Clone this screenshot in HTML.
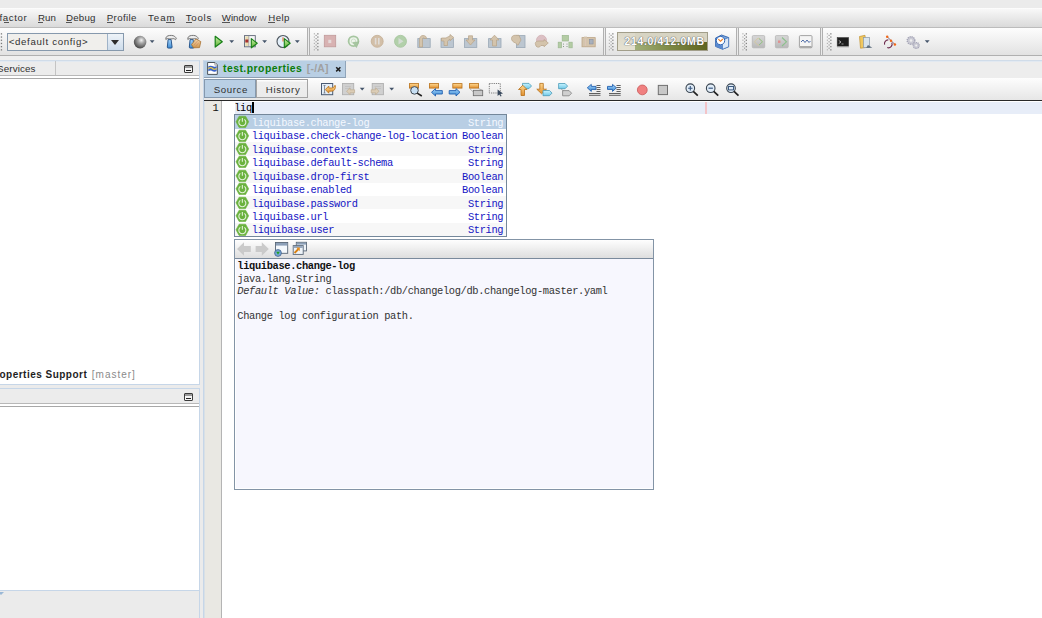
<!DOCTYPE html>
<html><head><meta charset="utf-8">
<style>
*{margin:0;padding:0;box-sizing:border-box}
html,body{width:1042px;height:618px;overflow:hidden;background:#ebebeb;font-family:"Liberation Sans",sans-serif;position:relative}
.a{position:absolute}
.t{position:absolute;white-space:pre;line-height:20px}
.tg{position:absolute;top:27px;height:29px;border:1px solid #b0b0b0;border-top-color:#bcbcbc;background:linear-gradient(#fdfdfd,#e2e2e2)}
.grip{position:absolute;width:5px;background-image:radial-gradient(circle at 1px 1px,#8c8c8c 0.7px,rgba(140,140,140,0) 1.1px);background-size:3px 3px}
.dd{position:absolute;width:0;height:0;border-left:2.5px solid transparent;border-right:2.5px solid transparent;border-top:3px solid #4a5868}
svg.a{overflow:visible}
</style></head><body>
<!-- menubar -->
<div class="a" style="left:0;top:8px;width:1042px;height:19px;background:linear-gradient(#fefefe 0,#f7f7f7 1.5px,#dadada 100%)"></div>
<div class="a" style="left:0;top:56px;width:1042px;height:4px;background:#efefef"></div>

<!-- toolbar groups -->
<div class="tg" style="left:-3px;width:311px"></div>
<div class="tg" style="left:309px;width:295px"></div>
<div class="tg" style="left:605px;width:132px"></div>
<div class="tg" style="left:738px;width:83px"></div>
<div class="tg" style="left:822px;width:240px"></div>
<div class="a" style="left:0;top:27px;width:1042px;height:1px;background:#bcbcbc"></div>
<div class="a" style="left:0;top:55px;width:1042px;height:1px;background:#b0b0b0"></div>

<!-- combo -->
<div class="a" style="left:7px;top:33px;width:117px;height:18px;border:1px solid #8699ad;background:#f0efec"></div>
<div class="a" style="left:107px;top:34px;width:16px;height:16px;border-left:1px solid #9fb3c8;background:linear-gradient(#eef3f8,#cddceb)"></div>
<div class="a" style="left:111px;top:40px;width:0;height:0;border-left:4.5px solid transparent;border-right:4.5px solid transparent;border-top:5px solid #2c2c2c"></div>

<!-- memory bar -->
<div class="a" style="left:617px;top:32px;width:91px;height:19px;border:1px solid #a29e8a;background:#d7d4c3"></div>
<div class="a" style="left:618px;top:33px;width:17px;height:17px;background:linear-gradient(#dcd9ca,#e6e2d2)"></div>
<div class="a" style="left:635px;top:41.7px;width:72px;height:8.3px;background:linear-gradient(90deg,#a2b07a,#808c48 45%,#5e6420)"></div>
<!-- left panel 1 -->
<div class="a" style="left:0;top:60px;width:200px;height:325px;border-top:1px solid #d0dce9;border-right:1px solid #c6d6e8;border-bottom:1px solid #c6d6e8;background:#fff"></div>
<div class="a" style="left:0;top:61px;width:199px;height:14px;background:linear-gradient(#e2e9f1 0,#e2e9f1 1px,#ececec 1px)"></div>
<div class="a" style="left:0;top:75px;width:199px;height:1px;background:#b8b8b8"></div>
<div class="a" style="left:0;top:78px;width:199px;height:1px;background:#a8a8a8"></div>
<div class="a" style="left:55px;top:61px;width:1px;height:14px;background:#c4c4c4"></div>
<!-- left panel 2 -->
<div class="a" style="left:0;top:388px;width:200px;height:203px;border-top:1px solid #c6d6e8;border-right:1px solid #c6d6e8;border-bottom:1px solid #c6d6e8;background:#fff"></div>
<div class="a" style="left:0;top:389px;width:199px;height:14px;background:#ececec"></div>
<div class="a" style="left:0;top:403px;width:199px;height:1px;background:#b8b8b8"></div>
<div class="a" style="left:0;top:406px;width:199px;height:1px;background:#a8a8a8"></div>
<!-- minimize buttons -->
<div class="a" style="left:184px;top:65px;width:9px;height:8px;border:1px solid #3c3c3c;border-radius:1px;background:linear-gradient(#9a9a9a 0,#9a9a9a 2px,#f4f4f4 2px)"></div>
<div class="a" style="left:186px;top:70px;width:5px;height:1px;background:#222"></div>
<div class="a" style="left:184px;top:393px;width:9px;height:8px;border:1px solid #3c3c3c;border-radius:1px;background:linear-gradient(#9a9a9a 0,#9a9a9a 2px,#f4f4f4 2px)"></div>
<div class="a" style="left:186px;top:398px;width:5px;height:1px;background:#222"></div>
<div class="a" style="left:-2px;top:592px;width:0;height:0;border-left:3.5px solid transparent;border-right:3.5px solid transparent;border-top:3.5px solid #9ab8d6"></div>
<div class="a" style="left:199px;top:591px;width:1px;height:27px;background:#c6d6e8"></div>

<!-- editor area -->
<div class="a" style="left:203px;top:60px;width:839px;height:1px;background:#d0dce9"></div>
<div class="a" style="left:203px;top:61px;width:839px;height:17px;background:linear-gradient(#e2e9f1 0,#e2e9f1 1px,#ededed 1px)"></div>
<div class="a" style="left:204px;top:61px;width:142px;height:17px;background:#b9cfe4;border-right:1px solid #90a5ba;border-bottom:1px solid #8d9fb2"></div>
<div class="a" style="left:203px;top:60px;width:1px;height:558px;background:#c6d6e8"></div>
<div class="a" style="left:204px;top:101px;width:1px;height:517px;background:#d8e0e6"></div>
<div class="a" style="left:204px;top:78px;width:838px;height:22px;background:linear-gradient(#fdfdfd,#e6e6e6)"></div>
<!-- Source / History buttons -->
<div class="a" style="left:204px;top:79px;width:52px;height:19px;border:1px solid #8599ae;background:#b9cfe4"></div>
<div class="a" style="left:256px;top:79px;width:52px;height:19px;border:1px solid #a4a4a4;border-top-color:#9c9c9c;background:linear-gradient(#fdfdfd 0,#fdfdfd 1px,#eeeeee 2px,#ebebeb)"></div>
<div class="a" style="left:204px;top:100px;width:838px;height:1px;background:#282828"></div>
<!-- editor body -->
<div class="a" style="left:205px;top:101px;width:16px;height:517px;background:#e9e8e3"></div>
<div class="a" style="left:221px;top:101px;width:1px;height:517px;background:#b4b4b4"></div>
<div class="a" style="left:222px;top:101px;width:820px;height:517px;background:#fff"></div>
<div class="a" style="left:235px;top:101.5px;width:807px;height:12px;background:#e7edf8"></div>
<div class="a" style="left:705px;top:101.5px;width:1.5px;height:12px;background:#f3c4c8"></div>
<div class="a" style="left:252.3px;top:102px;width:1.5px;height:11px;background:#000"></div>

<div class="t" style="left:234.20px;top:98.00px;font:10.4px 'Liberation Mono';line-height:20px;letter-spacing:-0.361px;color:#000">liq</div><div class="t" style="left:212.60px;top:98.10px;font:10.4px 'Liberation Mono';line-height:20px;letter-spacing:-0.361px;color:#111">1</div>

<!-- completion popup -->
<div class="a" style="left:234px;top:114px;width:273px;height:123px;border:1px solid #74879a;background:#fff"></div>
<div class="a" style="left:235px;top:115.30px;width:271px;height:13.46px;background:#b8cee4"></div>
<svg class="a" style="left:235.8px;top:116.10px" width="13" height="12" viewBox="0 0 13 12"><polygon points="3.1,0.2 9.6,0.2 12.7,5.8 9.6,11.5 3.1,11.5 0,5.8" fill="#6ab23e" stroke="#6ab23e" stroke-width="0.6" stroke-linejoin="round"/><path d="M4.3,3.4 A3.5,3.5 0 1,0 8.4,3.4" fill="none" stroke="#e4f2dc" stroke-width="1.1"/><line x1="6.35" y1="2" x2="6.35" y2="5.8" stroke="#e4f2dc" stroke-width="1.1"/></svg>
<div class="t" style="left:251.80px;top:112.80px;font:10.4px 'Liberation Mono';line-height:20px;letter-spacing:-0.361px;color:#f4f8ff">liquibase.change-log</div>
<div class="t" style="left:467.93px;top:112.80px;font:10.4px 'Liberation Mono';line-height:20px;letter-spacing:-0.361px;color:#f4f8ff">String</div>
<div class="a" style="left:235px;top:128.75px;width:271px;height:13.46px;background:#ffffff"></div>
<svg class="a" style="left:235.8px;top:129.55px" width="13" height="12" viewBox="0 0 13 12"><polygon points="3.1,0.2 9.6,0.2 12.7,5.8 9.6,11.5 3.1,11.5 0,5.8" fill="#6ab23e" stroke="#6ab23e" stroke-width="0.6" stroke-linejoin="round"/><path d="M4.3,3.4 A3.5,3.5 0 1,0 8.4,3.4" fill="none" stroke="#e4f2dc" stroke-width="1.1"/><line x1="6.35" y1="2" x2="6.35" y2="5.8" stroke="#e4f2dc" stroke-width="1.1"/></svg>
<div class="t" style="left:251.80px;top:126.25px;font:10.4px 'Liberation Mono';line-height:20px;letter-spacing:-0.361px;color:#1414c4">liquibase.check-change-log-location</div>
<div class="t" style="left:462.05px;top:126.25px;font:10.4px 'Liberation Mono';line-height:20px;letter-spacing:-0.361px;color:#1414c4">Boolean</div>
<div class="a" style="left:235px;top:142.20px;width:271px;height:13.46px;background:#f7f7f7"></div>
<svg class="a" style="left:235.8px;top:143.00px" width="13" height="12" viewBox="0 0 13 12"><polygon points="3.1,0.2 9.6,0.2 12.7,5.8 9.6,11.5 3.1,11.5 0,5.8" fill="#6ab23e" stroke="#6ab23e" stroke-width="0.6" stroke-linejoin="round"/><path d="M4.3,3.4 A3.5,3.5 0 1,0 8.4,3.4" fill="none" stroke="#e4f2dc" stroke-width="1.1"/><line x1="6.35" y1="2" x2="6.35" y2="5.8" stroke="#e4f2dc" stroke-width="1.1"/></svg>
<div class="t" style="left:251.80px;top:139.70px;font:10.4px 'Liberation Mono';line-height:20px;letter-spacing:-0.361px;color:#1414c4">liquibase.contexts</div>
<div class="t" style="left:467.93px;top:139.70px;font:10.4px 'Liberation Mono';line-height:20px;letter-spacing:-0.361px;color:#1414c4">String</div>
<div class="a" style="left:235px;top:155.65px;width:271px;height:13.46px;background:#ffffff"></div>
<svg class="a" style="left:235.8px;top:156.45px" width="13" height="12" viewBox="0 0 13 12"><polygon points="3.1,0.2 9.6,0.2 12.7,5.8 9.6,11.5 3.1,11.5 0,5.8" fill="#6ab23e" stroke="#6ab23e" stroke-width="0.6" stroke-linejoin="round"/><path d="M4.3,3.4 A3.5,3.5 0 1,0 8.4,3.4" fill="none" stroke="#e4f2dc" stroke-width="1.1"/><line x1="6.35" y1="2" x2="6.35" y2="5.8" stroke="#e4f2dc" stroke-width="1.1"/></svg>
<div class="t" style="left:251.80px;top:153.15px;font:10.4px 'Liberation Mono';line-height:20px;letter-spacing:-0.361px;color:#1414c4">liquibase.default-schema</div>
<div class="t" style="left:467.93px;top:153.15px;font:10.4px 'Liberation Mono';line-height:20px;letter-spacing:-0.361px;color:#1414c4">String</div>
<div class="a" style="left:235px;top:169.10px;width:271px;height:13.46px;background:#f7f7f7"></div>
<svg class="a" style="left:235.8px;top:169.90px" width="13" height="12" viewBox="0 0 13 12"><polygon points="3.1,0.2 9.6,0.2 12.7,5.8 9.6,11.5 3.1,11.5 0,5.8" fill="#6ab23e" stroke="#6ab23e" stroke-width="0.6" stroke-linejoin="round"/><path d="M4.3,3.4 A3.5,3.5 0 1,0 8.4,3.4" fill="none" stroke="#e4f2dc" stroke-width="1.1"/><line x1="6.35" y1="2" x2="6.35" y2="5.8" stroke="#e4f2dc" stroke-width="1.1"/></svg>
<div class="t" style="left:251.80px;top:166.60px;font:10.4px 'Liberation Mono';line-height:20px;letter-spacing:-0.361px;color:#1414c4">liquibase.drop-first</div>
<div class="t" style="left:462.05px;top:166.60px;font:10.4px 'Liberation Mono';line-height:20px;letter-spacing:-0.361px;color:#1414c4">Boolean</div>
<div class="a" style="left:235px;top:182.55px;width:271px;height:13.46px;background:#ffffff"></div>
<svg class="a" style="left:235.8px;top:183.35px" width="13" height="12" viewBox="0 0 13 12"><polygon points="3.1,0.2 9.6,0.2 12.7,5.8 9.6,11.5 3.1,11.5 0,5.8" fill="#6ab23e" stroke="#6ab23e" stroke-width="0.6" stroke-linejoin="round"/><path d="M4.3,3.4 A3.5,3.5 0 1,0 8.4,3.4" fill="none" stroke="#e4f2dc" stroke-width="1.1"/><line x1="6.35" y1="2" x2="6.35" y2="5.8" stroke="#e4f2dc" stroke-width="1.1"/></svg>
<div class="t" style="left:251.80px;top:180.05px;font:10.4px 'Liberation Mono';line-height:20px;letter-spacing:-0.361px;color:#1414c4">liquibase.enabled</div>
<div class="t" style="left:462.05px;top:180.05px;font:10.4px 'Liberation Mono';line-height:20px;letter-spacing:-0.361px;color:#1414c4">Boolean</div>
<div class="a" style="left:235px;top:196.00px;width:271px;height:13.46px;background:#f7f7f7"></div>
<svg class="a" style="left:235.8px;top:196.80px" width="13" height="12" viewBox="0 0 13 12"><polygon points="3.1,0.2 9.6,0.2 12.7,5.8 9.6,11.5 3.1,11.5 0,5.8" fill="#6ab23e" stroke="#6ab23e" stroke-width="0.6" stroke-linejoin="round"/><path d="M4.3,3.4 A3.5,3.5 0 1,0 8.4,3.4" fill="none" stroke="#e4f2dc" stroke-width="1.1"/><line x1="6.35" y1="2" x2="6.35" y2="5.8" stroke="#e4f2dc" stroke-width="1.1"/></svg>
<div class="t" style="left:251.80px;top:193.50px;font:10.4px 'Liberation Mono';line-height:20px;letter-spacing:-0.361px;color:#1414c4">liquibase.password</div>
<div class="t" style="left:467.93px;top:193.50px;font:10.4px 'Liberation Mono';line-height:20px;letter-spacing:-0.361px;color:#1414c4">String</div>
<div class="a" style="left:235px;top:209.45px;width:271px;height:13.46px;background:#ffffff"></div>
<svg class="a" style="left:235.8px;top:210.25px" width="13" height="12" viewBox="0 0 13 12"><polygon points="3.1,0.2 9.6,0.2 12.7,5.8 9.6,11.5 3.1,11.5 0,5.8" fill="#6ab23e" stroke="#6ab23e" stroke-width="0.6" stroke-linejoin="round"/><path d="M4.3,3.4 A3.5,3.5 0 1,0 8.4,3.4" fill="none" stroke="#e4f2dc" stroke-width="1.1"/><line x1="6.35" y1="2" x2="6.35" y2="5.8" stroke="#e4f2dc" stroke-width="1.1"/></svg>
<div class="t" style="left:251.80px;top:206.95px;font:10.4px 'Liberation Mono';line-height:20px;letter-spacing:-0.361px;color:#1414c4">liquibase.url</div>
<div class="t" style="left:467.93px;top:206.95px;font:10.4px 'Liberation Mono';line-height:20px;letter-spacing:-0.361px;color:#1414c4">String</div>
<div class="a" style="left:235px;top:222.90px;width:271px;height:13.46px;background:#f7f7f7"></div>
<svg class="a" style="left:235.8px;top:223.70px" width="13" height="12" viewBox="0 0 13 12"><polygon points="3.1,0.2 9.6,0.2 12.7,5.8 9.6,11.5 3.1,11.5 0,5.8" fill="#6ab23e" stroke="#6ab23e" stroke-width="0.6" stroke-linejoin="round"/><path d="M4.3,3.4 A3.5,3.5 0 1,0 8.4,3.4" fill="none" stroke="#e4f2dc" stroke-width="1.1"/><line x1="6.35" y1="2" x2="6.35" y2="5.8" stroke="#e4f2dc" stroke-width="1.1"/></svg>
<div class="t" style="left:251.80px;top:220.40px;font:10.4px 'Liberation Mono';line-height:20px;letter-spacing:-0.361px;color:#1414c4">liquibase.user</div>
<div class="t" style="left:467.93px;top:220.40px;font:10.4px 'Liberation Mono';line-height:20px;letter-spacing:-0.361px;color:#1414c4">String</div>

<!-- doc popup -->
<div class="a" style="left:234px;top:239px;width:420px;height:251px;border:1px solid #8394a6;border-right-width:1.5px;background:#fff"></div>
<div class="a" style="left:236px;top:259px;width:416.5px;height:229px;background:#f7f7fe"></div>
<div class="a" style="left:235px;top:240px;width:418px;height:18px;background:linear-gradient(#fefefe,#dedede)"></div>
<div class="a" style="left:235px;top:258px;width:418px;height:1px;background:#7a8a9c"></div>
<div class="t" style="left:237.30px;top:256.40px;font:bold 10.4px 'Liberation Mono';line-height:20px;letter-spacing:-0.361px;color:#111">liquibase.change-log</div>
<div class="t" style="left:237.30px;top:268.50px;font:10.4px 'Liberation Mono';line-height:20px;letter-spacing:-0.361px;color:#333">java.lang.String</div>
<div class="t" style="left:237.30px;top:280.90px;font:10.4px 'Liberation Mono';line-height:20px;letter-spacing:-0.361px;color:#333;white-space:pre"><i>Default Value:</i> classpath:/db/changelog/db.changelog-master.yaml</div>
<div class="t" style="left:237.30px;top:306.10px;font:10.4px 'Liberation Mono';line-height:20px;letter-spacing:-0.361px;color:#333">Change log configuration path.</div>

<svg class="a" style="left:0;top:0" width="1042" height="618" viewBox="0 0 1042 618"><defs>
<radialGradient id="globe" cx="0.6" cy="0.35" r="0.8"><stop offset="0" stop-color="#f4f4f4"/><stop offset="0.3" stop-color="#a8a8a8"/><stop offset="0.75" stop-color="#555"/><stop offset="1" stop-color="#2a2a2a"/></radialGradient>
<linearGradient id="broom" x1="0" y1="0" x2="0" y2="1"><stop offset="0" stop-color="#f6dcb2"/><stop offset="1" stop-color="#cc9448"/></linearGradient>
<linearGradient id="grn" x1="0" y1="0" x2="0" y2="1"><stop offset="0" stop-color="#c8f0a8"/><stop offset="1" stop-color="#5cb030"/></linearGradient>
<linearGradient id="blu" x1="0" y1="0" x2="0" y2="1"><stop offset="0" stop-color="#a8d8ff"/><stop offset="1" stop-color="#3a88d0"/></linearGradient>
<linearGradient id="org" x1="0" y1="0" x2="0" y2="1"><stop offset="0" stop-color="#ffd890"/><stop offset="1" stop-color="#e09030"/></linearGradient>
<linearGradient id="mem" x1="0" y1="0" x2="1" y2="0"><stop offset="0" stop-color="#b8c49c"/><stop offset="1" stop-color="#5a6018"/></linearGradient>
<linearGradient id="gbox" x1="0" y1="0" x2="0" y2="1"><stop offset="0" stop-color="#d8d8d8"/><stop offset="1" stop-color="#b8b8b8"/></linearGradient>
<linearGradient id="cyan" x1="0" y1="0" x2="0" y2="1"><stop offset="0" stop-color="#c8f4ff"/><stop offset="1" stop-color="#70c8e8"/></linearGradient>
</defs><rect x="0.8" y="33.2" width="1.3" height="1.3" fill="#7a7a7a"/><rect x="0.8" y="36.4" width="1.3" height="1.3" fill="#7a7a7a"/><rect x="0.8" y="39.6" width="1.3" height="1.3" fill="#7a7a7a"/><rect x="0.8" y="42.8" width="1.3" height="1.3" fill="#7a7a7a"/><rect x="0.8" y="46.0" width="1.3" height="1.3" fill="#7a7a7a"/><rect x="0.8" y="49.2" width="1.3" height="1.3" fill="#7a7a7a"/><circle cx="140.1" cy="42.1" r="6.3" fill="url(#globe)"/><polygon points="149.7,40.2 154.5,40.2 152.1,43.0" fill="#44546a"/><path d="M168.1,39.599999999999994 L171.1,39.599999999999994 L172.1,47.099999999999994 Q172.1,48.099999999999994 171.1,48.099999999999994 L168.3,48.099999999999994 Q167.3,48.099999999999994 167.3,47.099999999999994 Z" fill="url(#blu)" stroke="#1c4c84" stroke-width="0.9"/><path d="M165.9,37.9 C166.4,35.9 168.9,35.3 171.4,35.4 C173.9,35.5 175.9,36.699999999999996 176.3,38.9 L175.5,39.699999999999996 C174.5,38.699999999999996 173.1,38.3 172.1,38.9 L169.1,38.9 C168.1,38.3 166.9,38.4 165.9,39.599999999999994 Z" fill="#ececec" stroke="#686868" stroke-width="0.9"/><path d="M190.1,39.599999999999994 L193.1,39.599999999999994 L194.1,47.099999999999994 Q194.1,48.099999999999994 193.1,48.099999999999994 L190.3,48.099999999999994 Q189.3,48.099999999999994 189.3,47.099999999999994 Z" fill="url(#blu)" stroke="#1c4c84" stroke-width="0.9"/><path d="M187.9,37.9 C188.4,35.9 190.9,35.3 193.4,35.4 C195.9,35.5 197.9,36.699999999999996 198.3,38.9 L197.5,39.699999999999996 C196.5,38.699999999999996 195.1,38.3 194.1,38.9 L191.1,38.9 C190.1,38.3 188.9,38.4 187.9,39.599999999999994 Z" fill="#ececec" stroke="#686868" stroke-width="0.9"/><path d="M191.5,44.5 L196,39 L200.8,41.6 L199.5,47.6 L193.5,47.8 Z" fill="url(#broom)" stroke="#a87030" stroke-width="0.8"/><path d="M194,45 L197.5,41 M195.5,46.5 L199,42.5" stroke="#d08060" stroke-width="0.6"/><path d="M215.2,36.3 L222.3,41.7 L215.2,47.1 Z" fill="url(#grn)" stroke="#188018" stroke-width="1.2" stroke-linejoin="round"/><polygon points="229.3,40.2 234.10000000000002,40.2 231.70000000000002,43.0" fill="#44546a"/><rect x="244.5" y="35.6" width="10.8" height="11.2" fill="#f4f4f4" stroke="#606878" stroke-width="0.9"/><rect x="245.3" y="36.4" width="3.2" height="9.6" fill="#e8dcb0"/><rect x="245.3" y="39.5" width="3.2" height="3" fill="#a83030"/><line x1="248.8" y1="36" x2="248.8" y2="46.5" stroke="#808080" stroke-width="0.6"/><path d="M251.3,38.6 L257.2,43.3 L251.3,47.8 Z" fill="url(#grn)" stroke="#188018" stroke-width="1.1" stroke-linejoin="round"/><polygon points="262.2,40.2 267.0,40.2 264.59999999999997,43.0" fill="#44546a"/><circle cx="283" cy="41.5" r="6" fill="#e4f0fa" stroke="#505860" stroke-width="1.1"/><line x1="283" y1="37.2" x2="283" y2="41.5" stroke="#f07030" stroke-width="1.1"/><path d="M284.3,38.6 L290.2,43.2 L284.3,47.8 Z" fill="url(#grn)" stroke="#188018" stroke-width="1.1" stroke-linejoin="round"/><polygon points="294.9,40.2 299.7,40.2 297.29999999999995,43.0" fill="#44546a"/><rect x="313.8" y="33.2" width="1.2" height="1.2" fill="#b4b4b4"/><rect x="317.2" y="33.2" width="1.3" height="1.3" fill="#858585"/><rect x="315.5" y="34.8" width="1.2" height="1.2" fill="#9c9c9c"/><rect x="313.8" y="36.4" width="1.2" height="1.2" fill="#b4b4b4"/><rect x="317.2" y="36.4" width="1.3" height="1.3" fill="#858585"/><rect x="315.5" y="38.0" width="1.2" height="1.2" fill="#9c9c9c"/><rect x="313.8" y="39.6" width="1.2" height="1.2" fill="#b4b4b4"/><rect x="317.2" y="39.6" width="1.3" height="1.3" fill="#858585"/><rect x="315.5" y="41.2" width="1.2" height="1.2" fill="#9c9c9c"/><rect x="313.8" y="42.8" width="1.2" height="1.2" fill="#b4b4b4"/><rect x="317.2" y="42.8" width="1.3" height="1.3" fill="#858585"/><rect x="315.5" y="44.4" width="1.2" height="1.2" fill="#9c9c9c"/><rect x="313.8" y="46.0" width="1.2" height="1.2" fill="#b4b4b4"/><rect x="317.2" y="46.0" width="1.3" height="1.3" fill="#858585"/><rect x="315.5" y="47.6" width="1.2" height="1.2" fill="#9c9c9c"/><rect x="313.8" y="49.2" width="1.2" height="1.2" fill="#b4b4b4"/><rect x="317.2" y="49.2" width="1.3" height="1.3" fill="#858585"/><rect x="324.3" y="35.3" width="11.4" height="11.5" fill="#d8b2b2" stroke="#c09a9a" stroke-width="0.8"/><rect x="328.3" y="39.8" width="3" height="3.3" fill="#e6dada"/><circle cx="353.5" cy="41.2" r="4.9" fill="#eef4ec" stroke="#a6c6a0" stroke-width="1.8"/><circle cx="353.5" cy="41.2" r="2.2" fill="none" stroke="#c4dcc0" stroke-width="0.8"/><path d="M352.8,42.5 L358.8,41.8 L356.5,47.6 Z" fill="#a6c6a0" stroke="#98b892" stroke-width="0.5"/><circle cx="377.2" cy="41.3" r="6" fill="#d2bfa8" stroke="#c4ae94" stroke-width="0.8"/><rect x="374.8" y="38" width="1.6" height="6.5" fill="#e0dcd8"/><rect x="378" y="38" width="1.6" height="6.5" fill="#e0dcd8"/><circle cx="400.5" cy="41.3" r="6" fill="#b2d0aa" stroke="#a4c49c" stroke-width="0.8"/><path d="M398.5,38 L403.5,41.3 L398.5,44.6 Z" fill="#d4dcd4"/><rect x="417.79999999999995" y="38.6" width="12.399999999999999" height="8.799999999999999" fill="#bcc6d0" stroke="#9aa8b6" stroke-width="0.8"/><path d="M419.5,47 L419.5,40 C419.5,37 421,35.5 423,35.5 C425,35.5 426.5,36.5 426.5,38.5 L424,38.5 C424,37.8 423.5,37.5 423,37.8 C422.5,38 422.5,39 422.5,40 L422.5,47 Z" fill="#d4c4ac" stroke="#b8a488" stroke-width="0.7"/><rect x="441.0" y="38.6" width="12.399999999999999" height="8.799999999999999" fill="#bcc6d0" stroke="#9aa8b6" stroke-width="0.8"/><path d="M441.5,38 L446,38 C447,37.5 449,36.2 450,36 L450,34.5 L453.8,37.5 L450,40.8 L450,39.2 C449,39.5 448,40.5 447.5,41.5 L447.5,45.5 L444,45.5 L444,41 L441.5,41 Z" fill="#d4c4ac" stroke="#b8a488" stroke-width="0.7"/><rect x="464.4" y="38.6" width="12.399999999999999" height="8.799999999999999" fill="#bcc6d0" stroke="#9aa8b6" stroke-width="0.8"/><path d="M468.5,35.8 L472.5,35.8 L472.5,40 L475,40 L470.5,45 L466,40 L468.5,40 Z" fill="#d4c4ac" stroke="#b8a488" stroke-width="0.7"/><rect x="488.59999999999997" y="38.6" width="12.399999999999999" height="8.799999999999999" fill="#bcc6d0" stroke="#9aa8b6" stroke-width="0.8"/><path d="M492.5,46 L496.5,46 L496.5,40 L499,40 L494.5,35.2 L490,40 L492.5,40 Z" fill="#d4c4ac" stroke="#b8a488" stroke-width="0.7"/><rect x="516.4" y="35.6" width="8.6" height="12" fill="#bcc6d0" stroke="#9aa8b6" stroke-width="0.8"/><path d="M511.5,38.5 C511.5,36.5 513,35.3 515,35.3 L519,35.3 L521,40 L518,45.3 L515.5,43 C513,42 511.5,40.5 511.5,38.5 Z" fill="#d4c4ac" stroke="#b8a488" stroke-width="0.7"/><circle cx="541.5" cy="40.2" r="5" fill="#dcc0c4" stroke="#d0b0b4" stroke-width="0.8"/><path d="M535.3,43.5 C535.5,41.5 537,41 539,41 L544,41 L544,39.5 L548.3,43 L544,46.8 L544,45.5 L541,45.5 C540,47.5 537,47.8 536,46 Z" fill="#d4c4ac" stroke="#b8a488" stroke-width="0.7"/><rect x="562.2" y="35.4" width="6.3" height="5.6" fill="#b4cca4" stroke="#9cb890" stroke-width="0.7"/><rect x="558.2" y="42.2" width="3.3" height="5.6" fill="#b4cca4" stroke="#9cb890" stroke-width="0.7"/><rect x="568.9" y="42.2" width="3.3" height="5.6" fill="#b4cca4" stroke="#9cb890" stroke-width="0.7"/><rect x="563" y="43.6" width="1" height="1" fill="#8c9c8c"/><rect x="566.5" y="43.6" width="1" height="1" fill="#8c9c8c"/><rect x="563" y="46" width="1" height="1" fill="#8c9c8c"/><rect x="566.5" y="46" width="1" height="1" fill="#8c9c8c"/><rect x="582" y="37.6" width="13.2" height="9.2" fill="#d4c4ac" stroke="#bca688" stroke-width="0.8"/><rect x="584" y="36.6" width="3" height="1.5" fill="#d4c4ac"/><rect x="589.3" y="39.5" width="3.8" height="4.5" fill="#a8b0bc" stroke="#8890a0" stroke-width="0.6"/><line x1="585.5" y1="38.5" x2="585.5" y2="46" stroke="#e0c8c0" stroke-width="0.6"/><rect x="608.8" y="33.2" width="1.2" height="1.2" fill="#b4b4b4"/><rect x="612.2" y="33.2" width="1.3" height="1.3" fill="#858585"/><rect x="610.5" y="34.8" width="1.2" height="1.2" fill="#9c9c9c"/><rect x="608.8" y="36.4" width="1.2" height="1.2" fill="#b4b4b4"/><rect x="612.2" y="36.4" width="1.3" height="1.3" fill="#858585"/><rect x="610.5" y="38.0" width="1.2" height="1.2" fill="#9c9c9c"/><rect x="608.8" y="39.6" width="1.2" height="1.2" fill="#b4b4b4"/><rect x="612.2" y="39.6" width="1.3" height="1.3" fill="#858585"/><rect x="610.5" y="41.2" width="1.2" height="1.2" fill="#9c9c9c"/><rect x="608.8" y="42.8" width="1.2" height="1.2" fill="#b4b4b4"/><rect x="612.2" y="42.8" width="1.3" height="1.3" fill="#858585"/><rect x="610.5" y="44.4" width="1.2" height="1.2" fill="#9c9c9c"/><rect x="608.8" y="46.0" width="1.2" height="1.2" fill="#b4b4b4"/><rect x="612.2" y="46.0" width="1.3" height="1.3" fill="#858585"/><rect x="610.5" y="47.6" width="1.2" height="1.2" fill="#9c9c9c"/><rect x="608.8" y="49.2" width="1.2" height="1.2" fill="#b4b4b4"/><rect x="612.2" y="49.2" width="1.3" height="1.3" fill="#858585"/><path d="M715.6,38 L721.5,35 L728.6,37.5 L728.6,46.8 L722.5,49.2 L715.6,46.5 Z" fill="#7aa4dc" stroke="#3466b0" stroke-width="0.9"/><path d="M722.5,40.2 L728.6,37.5 L728.6,46.8 L722.5,49.2 Z" fill="#dce8f6" stroke="#3466b0" stroke-width="0.6"/><path d="M716,46.4 L722.5,49.2 L722.5,46 L716,43.5 Z" fill="#5a8ad0"/><circle cx="720.5" cy="40.6" r="4.2" fill="#fff" stroke="#2e64b4" stroke-width="1"/><path d="M718.4,39.2 L720.5,41.3 L722.8,39" fill="none" stroke="#f07818" stroke-width="1.1"/><rect x="742.3" y="33.2" width="1.2" height="1.2" fill="#b4b4b4"/><rect x="745.7" y="33.2" width="1.3" height="1.3" fill="#858585"/><rect x="744.0" y="34.8" width="1.2" height="1.2" fill="#9c9c9c"/><rect x="742.3" y="36.4" width="1.2" height="1.2" fill="#b4b4b4"/><rect x="745.7" y="36.4" width="1.3" height="1.3" fill="#858585"/><rect x="744.0" y="38.0" width="1.2" height="1.2" fill="#9c9c9c"/><rect x="742.3" y="39.6" width="1.2" height="1.2" fill="#b4b4b4"/><rect x="745.7" y="39.6" width="1.3" height="1.3" fill="#858585"/><rect x="744.0" y="41.2" width="1.2" height="1.2" fill="#9c9c9c"/><rect x="742.3" y="42.8" width="1.2" height="1.2" fill="#b4b4b4"/><rect x="745.7" y="42.8" width="1.3" height="1.3" fill="#858585"/><rect x="744.0" y="44.4" width="1.2" height="1.2" fill="#9c9c9c"/><rect x="742.3" y="46.0" width="1.2" height="1.2" fill="#b4b4b4"/><rect x="745.7" y="46.0" width="1.3" height="1.3" fill="#858585"/><rect x="744.0" y="47.6" width="1.2" height="1.2" fill="#9c9c9c"/><rect x="742.3" y="49.2" width="1.2" height="1.2" fill="#b4b4b4"/><rect x="745.7" y="49.2" width="1.3" height="1.3" fill="#858585"/><rect x="752.3" y="35.6" width="12.4" height="12.2" rx="1" fill="url(#gbox)" stroke="#b0b0b0" stroke-width="0.7"/><path d="M754.5,41.8 L758.2,38 L762.5,41.8 L758.2,45.5 Z" fill="none" stroke="#d4c8a0" stroke-width="1"/><path d="M759,38.5 L762.5,41.8 L759,45" fill="none" stroke="#8cc08c" stroke-width="1"/><rect x="775.4" y="35.6" width="12.8" height="12.2" rx="1" fill="url(#gbox)" stroke="#b0b0b0" stroke-width="0.7"/><rect x="778" y="40.5" width="2.4" height="2.4" fill="#e09090"/><path d="M782,37.5 L786.5,41.8 L782,46" fill="none" stroke="#8cc08c" stroke-width="1.1"/><rect x="799.4" y="35.6" width="12.6" height="12.2" rx="1" fill="#f4f4f4" stroke="#9a9a9a" stroke-width="0.9"/><path d="M801,42 L803,40 L805,42.5 L807,40 L809,42.5 L810.5,41" fill="none" stroke="#4060a0" stroke-width="0.9"/><line x1="800" y1="46.8" x2="811.5" y2="46.8" stroke="#888" stroke-width="1"/><rect x="826.8" y="33.2" width="1.2" height="1.2" fill="#b4b4b4"/><rect x="830.2" y="33.2" width="1.3" height="1.3" fill="#858585"/><rect x="828.5" y="34.8" width="1.2" height="1.2" fill="#9c9c9c"/><rect x="826.8" y="36.4" width="1.2" height="1.2" fill="#b4b4b4"/><rect x="830.2" y="36.4" width="1.3" height="1.3" fill="#858585"/><rect x="828.5" y="38.0" width="1.2" height="1.2" fill="#9c9c9c"/><rect x="826.8" y="39.6" width="1.2" height="1.2" fill="#b4b4b4"/><rect x="830.2" y="39.6" width="1.3" height="1.3" fill="#858585"/><rect x="828.5" y="41.2" width="1.2" height="1.2" fill="#9c9c9c"/><rect x="826.8" y="42.8" width="1.2" height="1.2" fill="#b4b4b4"/><rect x="830.2" y="42.8" width="1.3" height="1.3" fill="#858585"/><rect x="828.5" y="44.4" width="1.2" height="1.2" fill="#9c9c9c"/><rect x="826.8" y="46.0" width="1.2" height="1.2" fill="#b4b4b4"/><rect x="830.2" y="46.0" width="1.3" height="1.3" fill="#858585"/><rect x="828.5" y="47.6" width="1.2" height="1.2" fill="#9c9c9c"/><rect x="826.8" y="49.2" width="1.2" height="1.2" fill="#b4b4b4"/><rect x="830.2" y="49.2" width="1.3" height="1.3" fill="#858585"/><rect x="837.2" y="37.6" width="11.4" height="8.6" fill="#1e1e1e" stroke="#3a3a3a" stroke-width="0.6"/><line x1="837" y1="46.8" x2="849" y2="46.8" stroke="#a0a0a0" stroke-width="1"/><path d="M838.8,40.5 L841,42 L838.8,43.5" fill="none" stroke="#e0e0e0" stroke-width="0.7"/><line x1="841.5" y1="44" x2="843.5" y2="44" stroke="#e0e0e0" stroke-width="0.6"/><path d="M859.5,36.5 L865,35.3 L866,47.5 L860.5,48.2 Z" fill="#f0c860" stroke="#c09030" stroke-width="0.7"/><rect x="863.5" y="37.5" width="6" height="10" fill="#d8e4ec" stroke="#8898a8" stroke-width="0.7"/><path d="M868,45 L872.3,47.8 L866,48 Z" fill="#607080"/><path d="M888.3,39.9 A3.7,3.7 0 0,0 884.6,44.6" fill="none" stroke="#6c2a4c" stroke-width="1.1"/><path d="M887.2,47.6 A3.7,3.7 0 0,0 891.8,42.6" fill="none" stroke="#6c2a4c" stroke-width="1.1"/><line x1="887.2" y1="36.7" x2="895" y2="44.6" stroke="#6a4a5a" stroke-width="0.8"/><circle cx="887.2" cy="36.7" r="1.25" fill="#f06818"/><circle cx="891" cy="40.7" r="1.25" fill="#f06818"/><circle cx="894.9" cy="44.5" r="1.25" fill="#f06818"/><circle cx="911" cy="40.5" r="3.8" fill="#cacad4" stroke="#a4a4b6" stroke-width="1.4" stroke-dasharray="1.2 0.8"/><circle cx="911" cy="40.5" r="1.3" fill="#eee"/><circle cx="916.2" cy="45.5" r="3" fill="#cacad4" stroke="#a4a4b6" stroke-width="1.2" stroke-dasharray="1 0.7"/><circle cx="916.2" cy="45.5" r="1" fill="#eee"/><polygon points="924.8,40.3 929.5999999999999,40.3 927.1999999999999,43.099999999999994" fill="#44546a"/><rect x="321.5" y="83.5" width="11.2" height="11.2" fill="#e4eef8" stroke="#4a5a72" stroke-width="1"/><path d="M323.5,85.5 L325.5,85.5 M324.5,85.5 L324.5,93 M323.5,93 L325.5,93" stroke="#707888" stroke-width="0.8"/><path d="M325.3,89.6 L328.8,86 L328.8,88 L331.5,88 C333.5,87.8 334.6,86.8 334.6,85.6 L335.4,85.6 C335.6,88.6 334.6,91.2 331.5,91.2 L328.8,91.2 L328.8,93.2 Z" fill="url(#org)" stroke="#b87018" stroke-width="0.8" stroke-linejoin="round"/><rect x="342.5" y="83.5" width="11.2" height="11.2" fill="#d0d0d0" stroke="#b0b0b0" stroke-width="0.9"/><path d="M345,86.5 L351,86.5 M345,88.5 L351,88.5" stroke="#bdbdbd" stroke-width="0.7"/><path d="M346.6,91.2 L350,87.8 L350,89.8 L354.6,89.8 L354.6,92.8 L350,92.8 L350,94.8 Z" fill="#dccdb6" stroke="#bfae94" stroke-width="0.7"/><polygon points="359.8,87.8 364.6,87.8 362.2,90.6" fill="#44546a"/><rect x="372.2" y="83.5" width="11.2" height="11.2" fill="#d0d0d0" stroke="#b0b0b0" stroke-width="0.9"/><path d="M374.5,86.5 L381,86.5 M374.5,88.5 L381,88.5" stroke="#bdbdbd" stroke-width="0.7"/><path d="M379,91.2 L375.6,87.8 L375.6,89.8 L371.2,89.8 L371.2,92.8 L375.6,92.8 L375.6,94.8 Z" fill="#dccdb6" stroke="#bfae94" stroke-width="0.7"/><polygon points="389.3,87.8 394.1,87.8 391.7,90.6" fill="#44546a"/><rect x="409.4" y="83.60000000000001" width="9.2" height="4.5" fill="url(#org)" stroke="#b87018" stroke-width="0.8"/><circle cx="414.5" cy="90.4" r="3.8" fill="#c8e0f4" stroke="#404850" stroke-width="1"/><line x1="417.2" y1="93.1" x2="421.8" y2="96" stroke="#202020" stroke-width="1.6"/><rect x="429.4" y="83.60000000000001" width="9.2" height="4.5" fill="url(#org)" stroke="#b87018" stroke-width="0.8"/><path d="M431.5,92.3 L435.5,88.6 L435.5,90.6 L442.3,90.6 L442.3,94 L435.5,94 L435.5,96 Z" fill="url(#blu)" stroke="#2060b0" stroke-width="0.9"/><rect x="452.79999999999995" y="83.60000000000001" width="9.2" height="4.5" fill="url(#org)" stroke="#b87018" stroke-width="0.8"/><path d="M460,92.3 L456,88.6 L456,90.6 L449.2,90.6 L449.2,94 L456,94 L456,96 Z" fill="url(#blu)" stroke="#2060b0" stroke-width="0.9"/><rect x="469.4" y="83.60000000000001" width="9.2" height="4.5" fill="url(#org)" stroke="#b87018" stroke-width="0.8"/><rect x="473.3" y="90.3" width="9.4" height="5.4" fill="#c8c8c8" stroke="#6a6a6a" stroke-width="0.8"/><path d="M470,88.8 L473.3,92 M478.5,88.5 L482.5,90.3" stroke="#888" stroke-width="0.6"/><rect x="489.3" y="83.5" width="11" height="9.5" fill="none" stroke="#707070" stroke-width="0.9" stroke-dasharray="1.2 1"/><path d="M497.6,89.5 L497.6,96 L499.3,94.5 L500.6,96.5 L501.6,96 L500.5,94 L503,93.6 Z" fill="#3a4a5e"/><path d="M522.5,83.4 L529.0,83.4 L531.5,86.0 L529.0,88.60000000000001 L522.5,88.60000000000001 Z" fill="url(#cyan)" stroke="#4a9ab8" stroke-width="0.8"/><path d="M518.5,89.5 L522.8,85.3 L527,89.5 L524.5,89.5 L524.5,95.5 L521,95.5 L521,89.5 Z" fill="url(#org)" stroke="#b87018" stroke-width="0.8"/><path d="M539.8,83.4 L543.3,83.4 L543.3,89.2 L546.5,89.2 L541.6,93.8 L536.8,89.2 L539.8,89.2 Z" fill="url(#org)" stroke="#b87018" stroke-width="0.8"/><path d="M543,90.5 L549.5,90.5 L552,93.1 L549.5,95.7 L543,95.7 Z" fill="url(#cyan)" stroke="#4a9ab8" stroke-width="0.8"/><path d="M558.6,83.5 L565.1,83.5 L567.6,86.1 L565.1,88.7 L558.6,88.7 Z" fill="url(#cyan)" stroke="#4a9ab8" stroke-width="0.8"/><path d="M562.6,90.6 L569.1,90.6 L571.6,93.19999999999999 L569.1,95.8 L562.6,95.8 Z" fill="#d0d0d0" stroke="#808080" stroke-width="0.8"/><path d="M561,89 L563.5,90.8" stroke="#666" stroke-width="0.6" stroke-dasharray="0.8 0.6"/><path d="M587.3,87.8 L591.3,84.4 L591.3,86.4 L596,86.4 L596,89.4 L591.3,89.4 L591.3,91.4 Z" fill="url(#blu)" stroke="#2060b0" stroke-width="0.9"/><path d="M596.5,85.5 L600.5,85.5 M596.5,87.5 L600.5,87.5 M596.5,89.5 L600.5,89.5 M596.5,91.5 L600.5,91.5 M589,93.5 L600.5,93.5 M589,95.3 L600.5,95.3" stroke="#606060" stroke-width="1"/><path d="M616.5,87.8 L612.5,84.4 L612.5,86.4 L607.5,86.4 L607.5,89.4 L612.5,89.4 L612.5,91.4 Z" fill="url(#blu)" stroke="#2060b0" stroke-width="0.9"/><path d="M616.5,85.5 L620.7,85.5 M616.5,87.5 L620.7,87.5 M616.5,89.5 L620.7,89.5 M616.5,91.5 L620.7,91.5 M609,93.5 L620.7,93.5 M609,95.3 L620.7,95.3" stroke="#606060" stroke-width="1"/><circle cx="642.3" cy="89.9" r="4.9" fill="#f08080" stroke="#c85858" stroke-width="0.8"/><rect x="658.3" y="85.4" width="9.2" height="9.2" fill="#c8c8c8" stroke="#707070" stroke-width="1"/><circle cx="690.3" cy="88.2" r="4.3" fill="#e0ecf8" stroke="#384450" stroke-width="1.1"/><line x1="693.3" y1="91.3" x2="697.8" y2="95.6" stroke="#202020" stroke-width="1.7"/><path d="M688.0999999999999,88.2 L692.5,88.2 M690.3,86 L690.3,90.4" stroke="#3c5a80" stroke-width="1.1"/><circle cx="710.7" cy="88.2" r="4.3" fill="#e0ecf8" stroke="#384450" stroke-width="1.1"/><line x1="713.7" y1="91.3" x2="718.2" y2="95.6" stroke="#202020" stroke-width="1.7"/><path d="M708.5,88.2 L712.9000000000001,88.2" stroke="#3c5a80" stroke-width="1.2"/><circle cx="731" cy="88.2" r="4.3" fill="#e0ecf8" stroke="#384450" stroke-width="1.1"/><line x1="734" y1="91.3" x2="738.5" y2="95.6" stroke="#202020" stroke-width="1.7"/><rect x="728.5" y="86.5" width="5" height="3.4" fill="none" stroke="#3c5a80" stroke-width="1"/><path d="M237,249 L244,242.2 L244,246 L250.8,246 L250.8,252 L244,252 L244,255.8 Z" fill="#cacaca"/><path d="M268.8,249 L261.8,242.2 L261.8,246 L255.6,246 L255.6,252 L261.8,252 L261.8,255.8 Z" fill="#cacaca"/><rect x="275.5" y="242.5" width="12.2" height="10.8" fill="#f4f8fc" stroke="#566474" stroke-width="0.9"/><rect x="276" y="243" width="11.2" height="2.6" fill="#8ca0b8"/><circle cx="278" cy="253" r="3.4" fill="#78a8d8" stroke="#40608a" stroke-width="0.8"/><path d="M276.2,251.8 L279.8,251.8 L278,254.8 Z" fill="#20a020"/><rect x="296.3" y="242.3" width="10.2" height="8.6" fill="#eef3f8" stroke="#5a6878" stroke-width="0.9"/><rect x="296.8" y="242.8" width="9.2" height="1.8" fill="#8ca0b8"/><rect x="293.2" y="245.6" width="10" height="8.8" fill="#eef3f8" stroke="#5a6878" stroke-width="0.9"/><rect x="293.7" y="246.1" width="9" height="1.8" fill="#8ca0b8"/><path d="M294.5,253 L298.5,249" stroke="#d88010" stroke-width="1.8"/><path d="M296.2,247.6 L299.8,247.6 L299.8,251.2 Z" fill="#e89020"/><path d="M207.6,62.5 L215,62.5 L217.3,64.8 L217.3,74.4 L207.6,74.4 Z" fill="#fff" stroke="#4c545c" stroke-width="1"/><path d="M214.5,62.8 L214.8,65.3 L217,65.3" fill="#d0d0d0" stroke="#a0a0a0" stroke-width="0.6"/><path d="M208.3,66.3 C210,65.3 212,65.8 213.5,66.5 C215,67.2 216,66.5 216.6,66 L216.6,71 C215,72 213.5,71.7 212,71 C210.5,70.2 209.3,70.6 208.3,71.3 Z" fill="#3a62c8"/><path d="M208.3,68.6 C210,67.3 211.5,67.5 212.5,68.5 C213.5,69.5 215,69.5 216.6,68.5" fill="none" stroke="#f0d040" stroke-width="1.1"/><path d="M336.2,67.2 L340.4,71.4 M340.4,67.2 L336.2,71.4" stroke="#1e1e1e" stroke-width="1.5"/></svg>
<div class="a" style="left:4.3px;top:22px;width:4.500000000000001px;height:1px;background:#555"></div>
<div class="a" style="left:38.1px;top:22px;width:5.299999999999997px;height:1px;background:#555"></div>
<div class="a" style="left:65.6px;top:22px;width:6.6000000000000085px;height:1px;background:#555"></div>
<div class="a" style="left:106.8px;top:22px;width:6.200000000000003px;height:1px;background:#555"></div>
<div class="a" style="left:166.1px;top:22px;width:8.5px;height:1px;background:#555"></div>
<div class="a" style="left:185.8px;top:22px;width:6.399999999999977px;height:1px;background:#555"></div>
<div class="a" style="left:221.7px;top:22px;width:8.100000000000023px;height:1px;background:#555"></div>
<div class="a" style="left:268.3px;top:22px;width:6.899999999999977px;height:1px;background:#555"></div>
<div class="t" style="left:-0.60px;top:7.80px;font:9.7px 'Liberation Sans';line-height:20px;letter-spacing:0.640px;color:#303030">factor</div>
<div class="t" style="left:38.10px;top:7.80px;font:9.7px 'Liberation Sans';line-height:20px;letter-spacing:-0.042px;color:#303030">Run</div>
<div class="t" style="left:65.95px;top:7.80px;font:9.7px 'Liberation Sans';line-height:20px;letter-spacing:0.248px;color:#303030">Debug</div>
<div class="t" style="left:106.80px;top:7.80px;font:9.7px 'Liberation Sans';line-height:20px;letter-spacing:0.355px;color:#303030">Profile</div>
<div class="t" style="left:148.00px;top:7.80px;font:9.7px 'Liberation Sans';line-height:20px;letter-spacing:0.994px;color:#303030">Team</div>
<div class="t" style="left:185.80px;top:7.80px;font:9.7px 'Liberation Sans';line-height:20px;letter-spacing:0.707px;color:#303030">Tools</div>
<div class="t" style="left:221.70px;top:7.80px;font:9.7px 'Liberation Sans';line-height:20px;letter-spacing:0.068px;color:#303030">Window</div>
<div class="t" style="left:268.30px;top:7.80px;font:9.7px 'Liberation Sans';line-height:20px;letter-spacing:0.388px;color:#303030">Help</div>
<div class="t" style="left:8.70px;top:31.80px;font:9.7px 'Liberation Sans';line-height:20px;letter-spacing:0.668px;color:#303030">&lt;default config&gt;</div>
<div class="t" style="left:-3.00px;top:59.40px;font:9.8px 'Liberation Sans';line-height:20px;letter-spacing:0.133px;color:#303030">Services</div>
<div class="t" style="left:223.00px;top:59.10px;font:bold 10.4px 'Liberation Sans';line-height:20px;letter-spacing:0.472px;color:#0b7d0b">test.properties</div>
<div class="t" style="left:306.80px;top:59.10px;font:bold 10.4px 'Liberation Sans';line-height:20px;letter-spacing:0.222px;color:#a0a0a0">[-/A]</div>
<div class="t" style="left:213.80px;top:79.70px;font:9.7px 'Liberation Sans';line-height:20px;letter-spacing:0.559px;color:#303030">Source</div>
<div class="t" style="left:265.80px;top:79.70px;font:9.7px 'Liberation Sans';line-height:20px;letter-spacing:0.650px;color:#303030">History</div>
<div class="t" style="left:-0.50px;top:364.80px;font:bold 10px 'Liberation Sans';line-height:20px;letter-spacing:0.482px;color:#1e1e1e">operties Support</div>
<div class="t" style="left:91.80px;top:364.80px;font:10px 'Liberation Sans';line-height:20px;letter-spacing:0.994px;color:#8a8a8a">[master]</div>
<div class="t" style="left:624.60px;top:31.80px;font:bold 10.4px 'Liberation Sans';line-height:20px;letter-spacing:0.688px;color:#fff;text-shadow:0 0 1px #555,0 0 1px #555">214.0/412.0MB</div>
</body></html>
